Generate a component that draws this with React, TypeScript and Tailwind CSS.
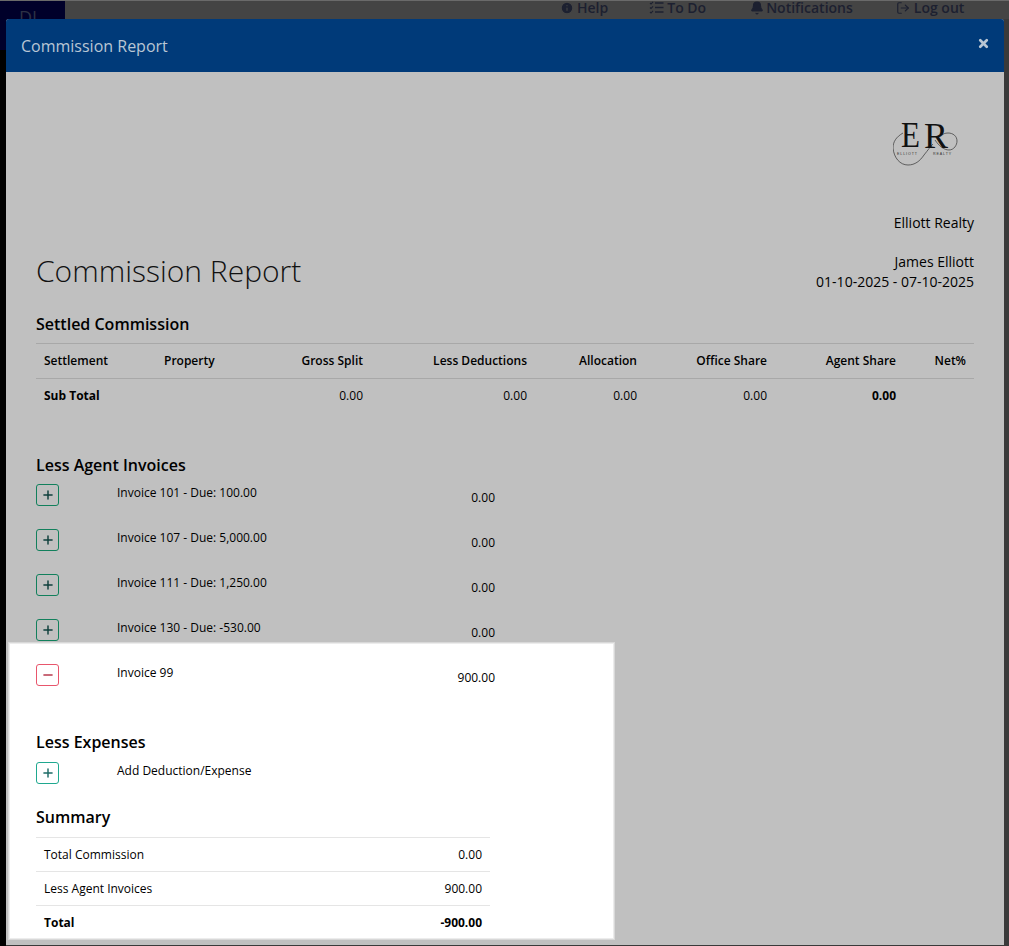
import { Info, Bell, LogOut, X, Plus, Minus } from "lucide-react";

function Logo() {
  return (
    <svg width="66" height="50" viewBox="0 0 66 50" className="block">
      <path d="M10 13 C3 17 0 22 0 28 C1 38 7 45 15 45 C22 45 27 41 31 35 C35 30 37 27 40 24" fill="none" stroke="#333" strokeWidth="0.7" />
      <path d="M42 20 C46 26 51 30 56 30 C61 30 64 25 64 21 C64 16 60 13 55 13 C52 13 50 14 49 15" fill="none" stroke="#333" strokeWidth="0.7" />
      <text x="8" y="27" textLength="19" lengthAdjust="spacingAndGlyphs" fontFamily="'Liberation Serif', serif" fontSize="36" fill="#111">E</text>
      <text x="31" y="28" textLength="24" lengthAdjust="spacingAndGlyphs" fontFamily="'Liberation Serif', serif" fontSize="36" fill="#111">R</text>
      <text x="4" y="35" fontFamily="'Liberation Sans', sans-serif" fontSize="3.6" letterSpacing="0.9" fill="#333">ELLIOTT</text>
      <text x="40" y="35" fontFamily="'Liberation Sans', sans-serif" fontSize="3.6" letterSpacing="0.9" fill="#333">REALTY</text>
    </svg>
  );
}

function TasksIcon() {
  return (
    <svg width="15" height="13" viewBox="0 0 15 13" fill="none" stroke="#1c2030" className="block">
      <path d="M1 2 L2 3 L4 0.8 M1 6.5 L2 7.5 L4 5.3 M1 11 L2 12 L4 9.8" strokeWidth="1.1" />
      <path d="M6 2 H14.5 M6 6.5 H14.5 M6 11 H14.5" strokeWidth="1.4" />
    </svg>
  );
}

function InvoiceRow({ label, amount }: { label: string; amount: string }) {
  return (
    <div className="flex h-[45px] items-start">
      <button className="flex h-[22px] w-[23px] items-center justify-center rounded-[3px] border border-[#12805c] text-[#0e3f3c]">
        <Plus size={14} strokeWidth={2.5} />
      </button>
      <div className="ml-[58px] w-[320px] text-[12px] leading-[17px] text-black">{label}</div>
      <div className="w-[58px] pt-[5px] text-right text-[12px] leading-[17px] text-black">{amount}</div>
    </div>
  );
}

function SummaryRow({ label, value, bold }: { label: string; value: string; bold?: boolean }) {
  return (
    <div className={`flex h-[34px] items-center justify-between border-t border-[#e5e5e5] px-2 pt-[1px] text-[12px] text-black ${bold ? "font-bold" : ""}`}>
      <span>{label}</span>
      <span>{value}</span>
    </div>
  );
}

const headers = [
  ["Settlement", "w-[120px] shrink-0 text-left"],
  ["Property", "w-[100px] shrink-0 text-left"],
  ["Gross Split", "w-[99px] shrink-0 text-right"],
  ["Less Deductions", "w-[164px] shrink-0 text-right"],
  ["Allocation", "w-[110px] shrink-0 text-right"],
  ["Office Share", "w-[130px] shrink-0 text-right"],
  ["Agent Share", "w-[129px] shrink-0 text-right"],
  ["Net%", "w-[70px] shrink-0 text-right"],
];
const subtotal = [
  ["Sub Total", "w-[120px] shrink-0 text-left font-bold"],
  ["", "w-[100px] shrink-0"],
  ["0.00", "w-[99px] shrink-0 text-right"],
  ["0.00", "w-[164px] shrink-0 text-right"],
  ["0.00", "w-[110px] shrink-0 text-right"],
  ["0.00", "w-[130px] shrink-0 text-right"],
  ["0.00", "w-[129px] shrink-0 text-right font-bold"],
  ["", "w-[70px] shrink-0"],
];

export default function App() {
  return (
    <div className="relative h-[946px] w-[1009px] overflow-hidden bg-[#3a3a3a] font-['Open_Sans','Noto_Sans',sans-serif]">
      <div className="flex h-[19px] border-t border-[#6a6a6a] bg-[#444444]">
        <div className="h-[49px] w-[65px] overflow-hidden bg-[#00002a] pl-[19px] text-[18px] leading-[33px] text-[#2c3145]">DI</div>
        <div className="flex flex-1 text-[14px] font-semibold leading-[13px] text-[#1c2030]">
          <span className="ml-[495px] flex h-[13px] items-center gap-[3px]"><Info size={14} fill="#1c2030" stroke="#444" />Help</span>
          <span className="ml-[41px] flex h-[13px] items-center gap-[3px]"><TasksIcon />To Do</span>
          <span className="ml-[44px] flex h-[13px] items-center gap-[2px]"><Bell size={14} fill="#1c2030" />Notifications</span>
          <span className="ml-[43px] flex h-[13px] items-center gap-[4px]"><LogOut size={14} />Log out</span>
        </div>
      </div>
      <div className="absolute left-0 top-[50px] h-[896px] w-[6px] bg-black" />
      <div className="absolute left-[6px] top-[19px] h-[926px] w-[998px] overflow-hidden rounded-t-[3px] bg-[#c0c0c0]">
        <div className="flex h-[53px] items-center justify-between bg-[#003a79] px-[15px] text-[#b9c6d4]">
          <span className="text-[16px]">Commission Report</span>
          <X size={13} strokeWidth={5} className="mr-[-1px] -mt-[4px]" />
        </div>
        <div className="px-[30px]">
          <div className="flex justify-end pt-[48px] pr-[15px]"><Logo /></div>
          <div className="mt-[43px] text-right text-[14px] leading-[20px] text-black">Elliott Realty</div>
          <div className="flex items-end justify-between">
            <h1 className="mb-[3px] text-[30px] font-light leading-[36px] text-[#111]">Commission Report</h1>
            <div className="mt-[19px] text-right text-[14px] leading-[20px] text-black">
              <div>James Elliott</div>
              <div>01-10-2025 - 07-10-2025</div>
            </div>
          </div>
          <h2 className="mt-[21px] text-[16px] font-semibold leading-[22px] text-black">Settled Commission</h2>
          <div className="mt-[8px] flex h-[36px] items-center border-y border-[#a8a8a8] px-2 text-[12px] font-semibold text-black">
            {headers.map(([t, c]) => <div key={t} className={c}>{t}</div>)}
          </div>
          <div className="flex h-[33px] items-center px-2 text-[12px] text-black">
            {subtotal.map(([t, c], i) => <div key={i} className={c}>{t}</div>)}
          </div>
          <h2 className="mt-[42px] text-[16px] font-semibold leading-[22px] text-black">Less Agent Invoices</h2>
          <div className="mt-[8px]">
            <InvoiceRow label="Invoice 101 - Due: 100.00" amount="0.00" />
            <InvoiceRow label="Invoice 107 - Due: 5,000.00" amount="0.00" />
            <InvoiceRow label="Invoice 111 - Due: 1,250.00" amount="0.00" />
            <InvoiceRow label="Invoice 130 - Due: -530.00" amount="0.00" />
          </div>
        </div>
        <div className="relative -mt-[21px] ml-[3px] h-[296px] w-[605px] bg-white pl-[27px] shadow-[inset_0_0_0_1px_#ececec,0_0_0_1px_#d8d8d8]">
          <div className="flex h-[88px] items-start pt-[21px]">
            <button className="flex h-[22px] w-[23px] items-center justify-center rounded-[3px] border border-[#e8566c] text-[#b83a4e]">
              <Minus size={14} strokeWidth={2.5} />
            </button>
            <div className="ml-[58px] w-[320px] text-[12px] leading-[17px] text-black">Invoice 99</div>
            <div className="w-[58px] pt-[5px] text-right text-[12px] leading-[17px] text-black">900.00</div>
          </div>
          <h2 className="text-[16px] font-semibold leading-[22px] text-black">Less Expenses</h2>
          <div className="mt-[9px] flex items-start">
            <button className="flex h-[22px] w-[23px] items-center justify-center rounded-[3px] border border-[#1fa88f] text-[#1d6b66]">
              <Plus size={14} strokeWidth={2.5} />
            </button>
            <div className="ml-[58px] text-[12px] leading-[17px] text-black">Add Deduction/Expense</div>
          </div>
          <h2 className="mt-[22px] text-[16px] font-semibold leading-[22px] text-black">Summary</h2>
          <div className="mt-[9px] w-[454px]">
            <SummaryRow label="Total Commission" value="0.00" />
            <SummaryRow label="Less Agent Invoices" value="900.00" />
            <SummaryRow label="Total" value="-900.00" bold />
          </div>
        </div>
      </div>
    </div>
  );
}
